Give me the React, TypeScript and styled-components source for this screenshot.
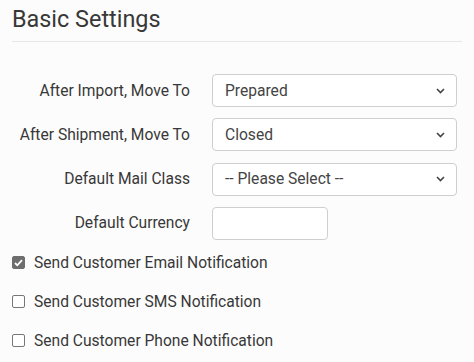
import styled, { createGlobalStyle } from "styled-components";

const GlobalStyle = createGlobalStyle`
  html, body {
    margin: 0;
    padding: 0;
    background: #fcfcfc;
    font-family: Roboto, "Liberation Sans", sans-serif;
    color: #333;
  }
`;

const Page = styled.div`
  width: 474px;
  height: 362px;
  padding: 0 12px;
  box-sizing: border-box;
  overflow: hidden;
`;

const Title = styled.h2`
  margin: 0;
  padding-top: 4px;
  height: 37px;
  font-size: 23.4px;
  font-weight: 400;
  line-height: 30px;
  color: #383838;
  border-bottom: 1px solid #e6e6e6;
`;

const Form = styled.div`
  display: grid;
  grid-template-columns: 178px auto;
  column-gap: 22px;
  row-gap: 11.3px;
  margin-top: 32px;
  align-items: center;
`;

const Label = styled.label`
  text-align: right;
  font-size: 15.6px;
  color: #383838;
`;

const SelectBox = styled.div`
  display: flex;
  align-items: center;
  justify-content: space-between;
  width: 245px;
  height: 33px;
  box-sizing: border-box;
  padding: 0 11px 0 12px;
  border: 1px solid #cfcfcf;
  border-radius: 4px;
  background: #fff;
  font-size: 15.6px;
  color: #444;
`;

const TextBox = styled.div<{ $width: number }>`
  width: ${(p) => p.$width}px;
  height: 33px;
  box-sizing: border-box;
  border: 1px solid #cfcfcf;
  border-radius: 4px;
  background: #fff;
`;

const Checks = styled.div`
  display: flex;
  flex-direction: column;
  gap: 19px;
  margin-top: 13px;
`;

const CheckRow = styled.label`
  display: flex;
  align-items: center;
  gap: 9px;
  font-size: 15.6px;
  color: #383838;
  height: 20px;
`;

const Box = styled.span<{ $checked?: boolean }>`
  width: 13px;
  height: 13px;
  box-sizing: border-box;
  border-radius: 2px;
  border: 1px solid ${(p) => (p.$checked ? "#6e6e6e" : "#777")};
  background: ${(p) => (p.$checked ? "#6e6e6e" : "#fff")};
  display: flex;
  align-items: center;
  justify-content: center;
`;

const Chevron = () => (
  <svg width="9" height="6" viewBox="0 0 9 6">
    <path d="M1 1l3.5 3.5L8 1" fill="none" stroke="#444" strokeWidth="1.6" />
  </svg>
);

const Select = ({ value }: { value: string }) => (
  <SelectBox>
    <span>{value}</span>
    <Chevron />
  </SelectBox>
);

const Check = ({ checked, children }: { checked?: boolean; children: string }) => (
  <CheckRow>
    <Box $checked={checked}>
      {checked && (
        <svg width="9" height="8" viewBox="0 0 9 8">
          <path d="M1 4l2.3 2.3L8 1.2" fill="none" stroke="#fff" strokeWidth="1.8" />
        </svg>
      )}
    </Box>
    {children}
  </CheckRow>
);

export default function App() {
  return (
    <Page>
      <GlobalStyle />
      <Title>Basic Settings</Title>
      <Form>
        <Label>After Import, Move To</Label>
        <Select value="Prepared" />
        <Label>After Shipment, Move To</Label>
        <Select value="Closed" />
        <Label>Default Mail Class</Label>
        <Select value="-- Please Select --" />
        <Label>Default Currency</Label>
        <TextBox $width={116} />
      </Form>
      <Checks>
        <Check checked>Send Customer Email Notification</Check>
        <Check>Send Customer SMS Notification</Check>
        <Check>Send Customer Phone Notification</Check>
      </Checks>
    </Page>
  );
}
